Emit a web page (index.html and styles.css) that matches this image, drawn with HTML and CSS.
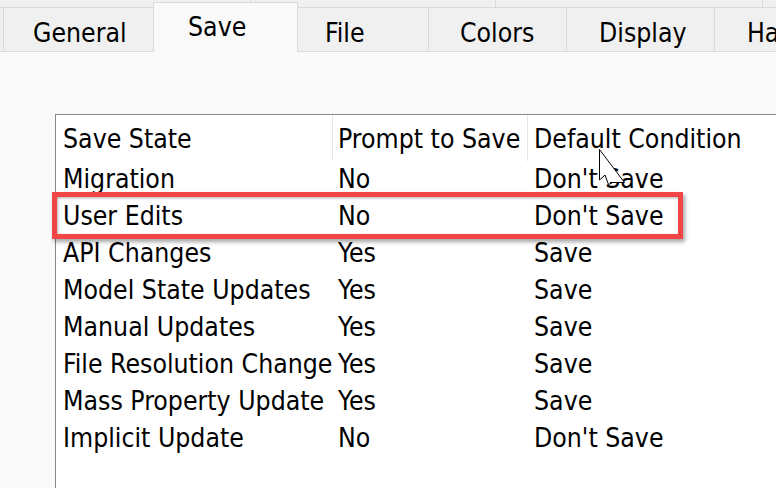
FILE: index.html
```html
<!DOCTYPE html>
<html>
<head>
<meta charset="utf-8">
<link rel="stylesheet" href="styles.css">
</head>
<body>
<div class="upper">
  <div class="utab u1"></div>
  <div class="utab u2"></div>
  <div class="utab u3"></div>
</div>
<div class="tabrow">
  <div class="tab t-general">General</div>
  <div class="tab sel t-save">Save</div>
  <div class="tab t-file">File</div>
  <div class="tab t-colors">Colors</div>
  <div class="tab t-display">Display</div>
  <div class="tab t-ha">Hardware</div>
</div>
<div class="content">
  <div class="list">
    <div class="row head">
      <div class="cell c1">Save State</div>
      <div class="cell c2">Prompt to Save</div>
      <div class="cell c3">Default Condition</div>
    </div>
    <div class="row"><div class="cell c1">Migration</div><div class="cell c2">No</div><div class="cell c3">Don't Save</div></div>
    <div class="row"><div class="cell c1">User Edits</div><div class="cell c2">No</div><div class="cell c3">Don't Save</div></div>
    <div class="row"><div class="cell c1">API Changes</div><div class="cell c2">Yes</div><div class="cell c3">Save</div></div>
    <div class="row"><div class="cell c1">Model State Updates</div><div class="cell c2">Yes</div><div class="cell c3">Save</div></div>
    <div class="row"><div class="cell c1">Manual Updates</div><div class="cell c2">Yes</div><div class="cell c3">Save</div></div>
    <div class="row"><div class="cell c1">File Resolution Change</div><div class="cell c2">Yes</div><div class="cell c3">Save</div></div>
    <div class="row"><div class="cell c1">Mass Property Update</div><div class="cell c2">Yes</div><div class="cell c3">Save</div></div>
    <div class="row"><div class="cell c1">Implicit Update</div><div class="cell c2">No</div><div class="cell c3">Don't Save</div></div>
  </div>
</div>
<div class="highlight"></div>
<svg class="cursor" width="28" height="40" viewBox="0 0 28 40">
  <polygon points="0.5,0.5 0.5,31 6,26 9.5,35.5 13,34 11,33.5 25.5,33.5" fill="#fff" stroke="#000" stroke-width="1"/>
</svg>
</body>
</html>
```
FILE: styles.css
```css
html, body {
  margin: 0;
  padding: 0;
}
body {
  width: 776px;
  height: 488px;
  overflow: hidden;
  background: #f9f9f9;
  font-family: "DejaVu Sans Condensed", "DejaVu Sans", "Liberation Sans", sans-serif;
  font-stretch: condensed;
  font-size: 26.4px;
  color: #000;
  position: relative;
}
.upper {
  display: flex;
  height: 7px;
  background: #f0f0f0;
  border-bottom: 1px solid #dadada;
}
.utab {
  box-sizing: border-box;
  height: 7px;
  border-right: 1px solid #dadada;
  flex: none;
}
.u1 { width: 251px; }
.u2 { width: 245px; }
.u3 { width: 267px; }
.tabrow {
  display: flex;
  align-items: flex-end;
  height: 43px;
  padding-left: 3px;
  background: #f0f0f0;
  border-bottom: 1px solid #dadada;
}
.tab {
  box-sizing: border-box;
  flex: none;
  height: 43px;
  padding-top: 10px;
  line-height: 30px;
  border-left: 1px solid #dadada;
  background: #f0f0f0;
  white-space: nowrap;
  overflow: hidden;
}
.tab.sel {
  height: 50px;
  margin-bottom: -1px;
  padding-top: 9px;
  border: 1px solid #dadada;
  border-bottom: none;
  background: #f9f9f9;
}
.t-general { width: 150px; padding-left: 29px; }
.t-save { width: 145px; padding-left: 34px; }
.t-file { width: 130px; padding-left: 27px; border-left: none; }
.t-colors { width: 138px; padding-left: 31px; }
.t-display { width: 148px; padding-left: 32px; }
.t-ha { width: 100px; padding-left: 32px; }
.content {
  padding: 62px 0 0 55px;
}
.list {
  background: #fff;
  border-left: 1px solid #828790;
  border-top: 1px solid #828790;
  height: 400px;
}
.row {
  display: grid;
  grid-template-columns: 277px 195px 1fr;
  line-height: 37px;
  height: 37px;
  white-space: nowrap;
}
.row.head {
  line-height: 44px;
  height: 44.5px;
}
.cell {
  box-sizing: border-box;
  overflow: visible;
}
.head .cell {
  padding-top: 1.5px;
}
.c1 { padding-left: 7px; }
.c2 { padding-left: 5px; }
.c3 { padding-left: 6px; }
.head .c1, .head .c2 {
  border-right: 1px solid #e5e5e5;
  margin-bottom: 2px;
}
.highlight {
  position: absolute;
  left: 52px;
  top: 192px;
  width: 631px;
  height: 47px;
  box-sizing: border-box;
  border: 5px solid #f04646;
  box-shadow: 2px 3px 4px rgba(0,0,0,0.35), inset 1px 1px 3px rgba(0,0,0,0.3);
}
.cursor {
  position: absolute;
  left: 599px;
  top: 149px;
}
```
